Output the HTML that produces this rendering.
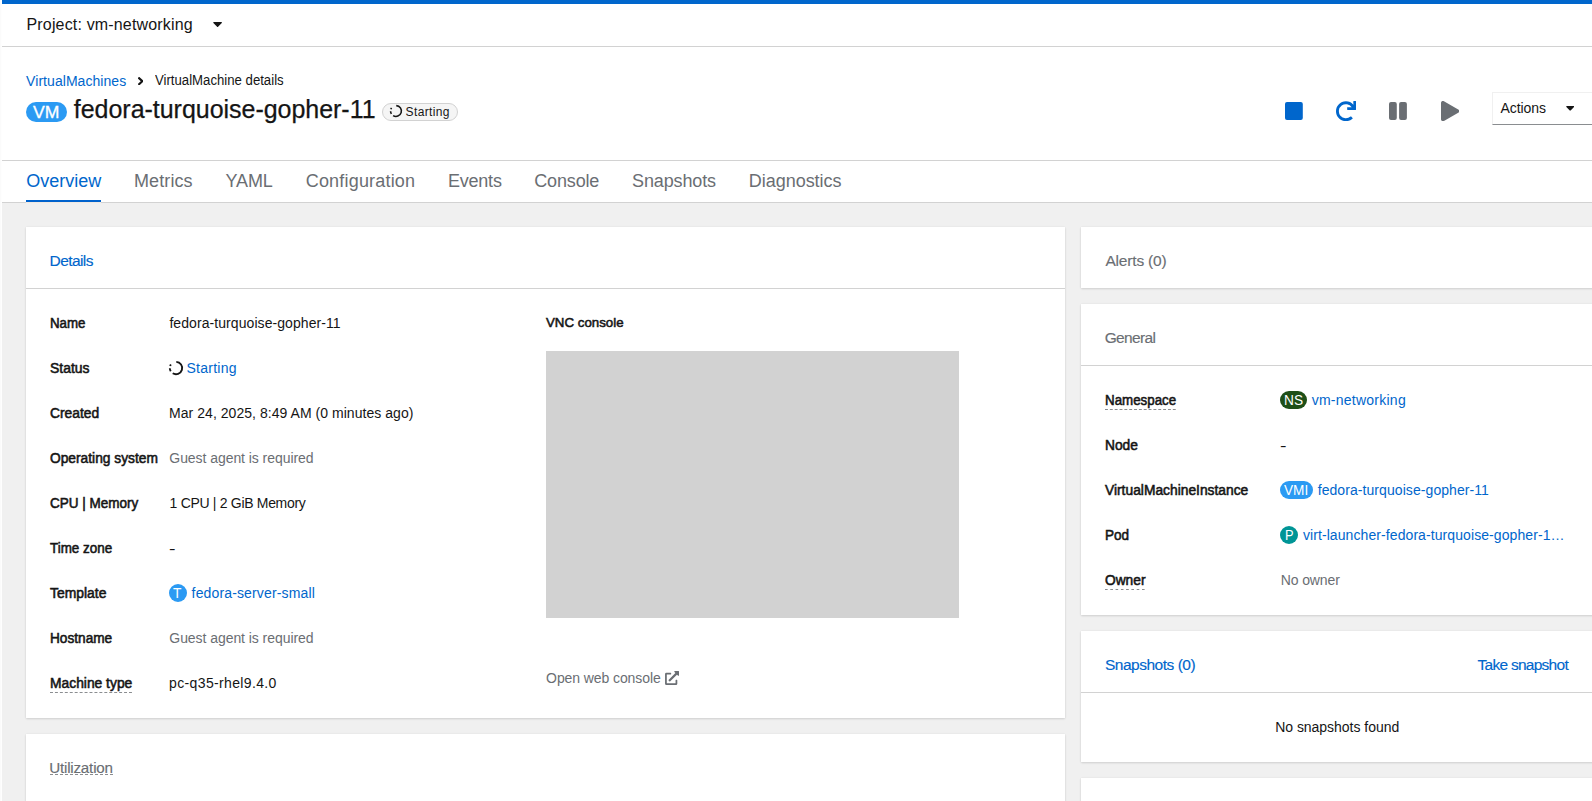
<!DOCTYPE html>
<html lang="en">
<head>
<meta charset="utf-8">
<title>fedora-turquoise-gopher-11 · VirtualMachine details</title>
<style>
html,body{margin:0;padding:0}
body{width:1592px;height:801px;overflow:hidden;position:relative;background:#f0f0f0;font-family:"Liberation Sans",Arial,sans-serif;color:#151515}
.abs,.t,.card,.hr,.badge,.dash,svg{position:absolute}
.t{white-space:nowrap;margin:0;padding:0;font-weight:400;line-height:normal;text-decoration:none;display:block}
h1.t{font-weight:400}
.edge{left:0;top:0;width:2px;height:801px;background:linear-gradient(90deg,#fbfbfb 0,#fbfbfb 50%,#fefefe 50%,#fefefe 100%)}
.topbar{left:2px;top:0;width:1590px;height:4px;background:#0066cc}
.head{left:2px;top:4px;width:1590px;height:199px;background:#fff}
.hr{height:1px;background:#d2d2d2}
.card{background:#fff;box-shadow:0 1px 2px 0 rgba(3,3,3,.12),0 0 2px 0 rgba(3,3,3,.06)}
.badge{border-radius:20px}
.dash{height:1px;background-image:linear-gradient(90deg,#8a8d90 3px,transparent 3px);background-repeat:repeat-x}
</style>
</head>
<body>
<div class="abs edge"></div>
<div class="abs topbar"></div>
<div class="abs head"></div>
<div class="hr" style="left:2px;top:46px;width:1590px"></div>
<div class="hr" style="left:2px;top:160px;width:1590px"></div>
<div class="hr" style="left:2px;top:202px;width:1590px"></div>
<div class="abs" style="left:26px;top:200px;width:75px;height:2px;background:#0062cc"></div>
<div class="abs" style="left:26px;top:202px;width:75px;height:1px;background:#f0e9e2"></div>

<!-- cards -->
<div class="card" style="left:26px;top:227px;width:1039px;height:491px"></div>
<div class="hr" style="left:26px;top:288px;width:1039px"></div>
<div class="card" style="left:26px;top:734px;width:1039px;height:100px"></div>
<div class="card" style="left:1081px;top:227px;width:520px;height:61px"></div>
<div class="card" style="left:1081px;top:304px;width:520px;height:311px"></div>
<div class="hr" style="left:1081px;top:365px;width:520px"></div>
<div class="card" style="left:1081px;top:631px;width:520px;height:131px"></div>
<div class="hr" style="left:1081px;top:692px;width:520px"></div>
<div class="card" style="left:1081px;top:778px;width:520px;height:60px"></div>

<!-- VNC placeholder -->
<div class="abs" style="left:546px;top:351px;width:413px;height:267px;background:#d2d2d2"></div>

<!-- badges -->
<div class="badge" style="left:26px;top:102px;width:41px;height:20px;background:#2b9af3"></div>
<div class="badge" style="left:382px;top:103px;width:74px;height:16px;background:#f5f5f5;border:1px solid #d2d2d2"></div>
<div class="badge" style="left:169px;top:584.2px;width:18px;height:18px;background:#2b9af3"></div>
<div class="badge" style="left:1279.9px;top:391px;width:27.4px;height:17.8px;background:#1e4f18"></div>
<div class="badge" style="left:1279.8px;top:480.9px;width:33.3px;height:17.8px;background:#2b9af3"></div>
<div class="badge" style="left:1279.8px;top:526.1px;width:18.1px;height:17.8px;background:#009596"></div>

<!-- dashed underlines -->
<div class="dash" style="left:50px;top:692px;width:82px;background-size:4.938px 1px"></div>
<div class="dash" style="left:50px;top:774px;width:63px;background-size:5.000px 1px"></div>
<div class="dash" style="left:1105px;top:409px;width:71px;background-size:4.857px 1px"></div>
<div class="dash" style="left:1105px;top:589px;width:40px;background-size:5.286px 1px"></div>

<!-- Actions dropdown box -->
<div class="abs" style="left:1492px;top:92.4px;width:110px;height:30.6px;background:#fff;border:1px solid #f0f0f0;border-bottom-color:#8a8d90"></div>

<!-- icons -->
<svg style="left:212.5px;top:22.1px" width="9.2" height="5" viewBox="0 0 9.2 5"><path d="M.9 0h7.4c.6 0 .9.7.5 1.1L5.1 4.8c-.3.3-.7.3-1 0L.4 1.1C0 .7.3 0 .9 0z" fill="#151515"/></svg>
<svg style="left:1565.7px;top:106.2px" width="8.4" height="4.6" viewBox="0 0 9.2 5"><path d="M.9 0h7.4c.6 0 .9.7.5 1.1L5.1 4.8c-.3.3-.7.3-1 0L.4 1.1C0 .7.3 0 .9 0z" fill="#151515"/></svg>
<svg style="left:137.6px;top:76.5px" width="5.7" height="8.3" viewBox="30 96 200 320" preserveAspectRatio="none"><path d="M224.3 273l-136 136c-9.4 9.4-24.6 9.4-33.9 0l-22.6-22.6c-9.4-9.4-9.4-24.6 0-33.9l96.4-96.4-96.4-96.4c-9.4-9.4-9.4-24.6 0-33.9L54.3 103c9.4-9.4 24.6-9.4 33.9 0l136 136c9.5 9.400 9.5 24.600.1 34z" fill="#151515"/></svg>
<!-- stop -->
<svg style="left:1285.1px;top:102px" width="17.8" height="17.9" viewBox="0 0 17.8 17.9"><rect width="17.8" height="17.9" rx="2" fill="#0066cc"/></svg>
<!-- restart -->
<svg style="left:1336.3px;top:100.8px" width="20.1" height="20.2" viewBox="8 0 504 504" preserveAspectRatio="none"><path d="M500.330 0h-47.410a12 12 0 0 0-12 12.570l4 82.760A247.420 247.420 0 0 0 256 8C119.340 8 7.900 119.530 8 256.190 8.100 393.070 119.100 504 256 504a247.100 247.100 0 0 0 166.180-63.910 12 12 0 0 0 .480-17.430l-34-34a12 12 0 0 0-16.380-.550A176 176 0 1 1 402.100 157.800l-101.530-4.870a12 12 0 0 0-12.570 12v47.410a12 12 0 0 0 12 12h200.330a12 12 0 0 0 12-12V12a12 12 0 0 0-12-12z" fill="#0066cc"/></svg>
<!-- pause -->
<svg style="left:1389px;top:102.1px" width="17.9" height="17.9" viewBox="0 0 17.9 17.9"><rect width="7.8" height="17.9" rx="2" fill="#6a6e73"/><rect x="10.1" width="7.8" height="17.9" rx="2" fill="#6a6e73"/></svg>
<!-- play -->
<svg style="left:1440.9px;top:100.8px" width="18.2" height="20.2" viewBox="0 0 448 512" preserveAspectRatio="none"><path d="M424.400 214.700L72.400 6.600C43.800-10.300 0 6.100 0 47.900V464c0 37.500 40.700 60.100 72.400 41.300l352-208c31.400-18.500 31.500-64.100 0-82.600z" fill="#6a6e73"/></svg>
<!-- spinner in title label -->
<svg style="left:388.9px;top:103.9px" width="14" height="14" viewBox="-8 -8 16 16"><g fill="none" stroke="#151515" stroke-width="1.85"><path d="M0.300 -6.200A6.200 6.200 0 1 1 -3.300 5.250"/><path d="M-5.250 3.300A6.200 6.200 0 0 1 -6.200 0.200"/><path d="M-5.850 -2.050A6.200 6.200 0 0 1 -5.100 -3.550"/></g></svg>
<!-- spinner in status row -->
<svg style="left:167.900px;top:359.800px" width="16" height="16" viewBox="-8 -8 16 16"><g fill="none" stroke="#151515" stroke-width="1.85"><path d="M0.300 -6.200A6.200 6.200 0 1 1 -3.300 5.250"/><path d="M-5.250 3.300A6.200 6.200 0 0 1 -6.200 0.200"/><path d="M-5.850 -2.050A6.200 6.200 0 0 1 -5.100 -3.550"/></g></svg>
<!-- external link -->
<svg style="left:665px;top:671px" width="14.1" height="14" viewBox="0 0 512 512"><path d="M432 320h-32a16 16 0 0 0-16 16v112H64V128h144a16 16 0 0 0 16-16V80a16 16 0 0 0-16-16H48a48 48 0 0 0-48 48v352a48 48 0 0 0 48 48h352a48 48 0 0 0 48-48V336a16 16 0 0 0-16-16zM488 0H360c-21.370 0-32.050 25.910-17 41l35.730 35.730L135 320.370a24 24 0 0 0 0 34L157.670 377a24 24 0 0 0 34 0l243.610-243.680L471 169c15 15 41 4.500 41-17V24a24 24 0 0 0-24-24z" fill="#6a6e73"/></svg>

<header>
<span class="t" style="left:26.5px;top:16.00px;font-size:16px;letter-spacing:0.161px;">Project: vm-networking</span>
<a class="t" style="left:26.1px;top:73.00px;font-size:14px;color:#0066cc;letter-spacing:0.053px;">VirtualMachines</a>
<span class="t" style="left:154.6px;top:72.00px;font-size:14px;transform:scaleX(0.941);transform-origin:0 0;">VirtualMachine details</span>
<span class="t" style="left:33.0px;top:103.00px;font-size:16.8px;color:#fff;transform:scaleX(1.049);transform-origin:0 0;-webkit-text-stroke:0.3px #fff;">VM</span>
<h1 class="t" style="left:73.8px;top:95.00px;font-size:25px;letter-spacing:-0.029px;-webkit-text-stroke:0.25px #151515;">fedora-turquoise-gopher-11</h1>
<span class="t" style="left:405.6px;top:105.00px;font-size:12px;letter-spacing:0.363px;">Starting</span>
<span class="t" style="left:1500.4px;top:100.00px;font-size:14px;letter-spacing:-0.037px;">Actions</span>
</header>
<nav aria-label="VirtualMachine tabs">
<a class="t" style="left:26.3px;top:171.00px;font-size:18px;color:#0066cc;letter-spacing:-0.017px;">Overview</a>
<a class="t" style="left:134.0px;top:171.00px;font-size:18px;color:#6a6e73;letter-spacing:0.100px;">Metrics</a>
<a class="t" style="left:225.5px;top:171.00px;font-size:18px;color:#6a6e73;letter-spacing:-0.129px;">YAML</a>
<a class="t" style="left:305.7px;top:171.00px;font-size:18px;color:#6a6e73;letter-spacing:0.193px;">Configuration</a>
<a class="t" style="left:448.0px;top:171.00px;font-size:18px;color:#6a6e73;letter-spacing:-0.226px;">Events</a>
<a class="t" style="left:534.2px;top:171.00px;font-size:18px;color:#6a6e73;letter-spacing:-0.141px;">Console</a>
<a class="t" style="left:632.0px;top:171.00px;font-size:18px;color:#6a6e73;letter-spacing:-0.120px;">Snapshots</a>
<a class="t" style="left:748.7px;top:171.00px;font-size:18px;color:#6a6e73;letter-spacing:-0.015px;">Diagnostics</a>
</nav>
<section aria-label="Details">
<a class="t" style="left:49.5px;top:252.00px;font-size:15.5px;color:#0066cc;letter-spacing:-0.565px;-webkit-text-stroke:0.15px;">Details</a>
<dt class="t" style="left:49.9px;top:315.00px;font-size:14px;transform:scaleX(0.950);transform-origin:0 0;-webkit-text-stroke:0.55px #151515;">Name</dt>
<dt class="t" style="left:49.9px;top:360.00px;font-size:14px;transform:scaleX(0.995);transform-origin:0 0;-webkit-text-stroke:0.55px #151515;">Status</dt>
<dt class="t" style="left:49.9px;top:405.00px;font-size:14px;transform:scaleX(0.986);transform-origin:0 0;-webkit-text-stroke:0.55px #151515;">Created</dt>
<dt class="t" style="left:49.9px;top:450.00px;font-size:14px;transform:scaleX(0.983);transform-origin:0 0;-webkit-text-stroke:0.55px #151515;">Operating system</dt>
<dt class="t" style="left:49.9px;top:495.00px;font-size:14px;transform:scaleX(0.965);transform-origin:0 0;-webkit-text-stroke:0.55px #151515;">CPU | Memory</dt>
<dt class="t" style="left:49.9px;top:540.00px;font-size:14px;transform:scaleX(0.959);transform-origin:0 0;-webkit-text-stroke:0.55px #151515;">Time zone</dt>
<dt class="t" style="left:49.9px;top:585.00px;font-size:14px;transform:scaleX(0.994);transform-origin:0 0;-webkit-text-stroke:0.55px #151515;">Template</dt>
<dt class="t" style="left:49.9px;top:630.00px;font-size:14px;transform:scaleX(0.975);transform-origin:0 0;-webkit-text-stroke:0.55px #151515;">Hostname</dt>
<dt class="t" style="left:49.9px;top:675.00px;font-size:14px;transform:scaleX(0.988);transform-origin:0 0;-webkit-text-stroke:0.55px #151515;">Machine type</dt>
<dd class="t" style="left:169.4px;top:315.00px;font-size:14px;letter-spacing:0.072px;">fedora-turquoise-gopher-11</dd>
<a class="t" style="left:186.5px;top:360.00px;font-size:14px;color:#0066cc;letter-spacing:0.250px;">Starting</a>
<dd class="t" style="left:169.1px;top:405.00px;font-size:14px;letter-spacing:0.041px;">Mar 24, 2025, 8:49 AM (0 minutes ago)</dd>
<dd class="t" style="left:169.3px;top:450.00px;font-size:14px;color:#6a6e73;letter-spacing:-0.056px;">Guest agent is required</dd>
<dd class="t" style="left:169.6px;top:495.00px;font-size:14px;letter-spacing:-0.312px;">1 CPU | 2 GiB Memory</dd>
<dd class="t" style="left:168.8px;top:541.00px;font-size:14px;transform:scaleX(1.391);transform-origin:0 0;">-</dd>
<span class="t" style="left:173.3px;top:585.00px;font-size:14px;color:#fff;transform:scaleX(0.981);transform-origin:0 0;">T</span>
<a class="t" style="left:191.6px;top:585.00px;font-size:14px;color:#0066cc;letter-spacing:0.145px;">fedora-server-small</a>
<dd class="t" style="left:169.3px;top:630.00px;font-size:14px;color:#6a6e73;letter-spacing:-0.056px;">Guest agent is required</dd>
<dd class="t" style="left:169.1px;top:675.00px;font-size:14px;letter-spacing:0.356px;">pc-q35-rhel9.4.0</dd>
<span class="t" style="left:545.8px;top:315.00px;font-size:13.6px;transform:scaleX(0.978);transform-origin:0 0;-webkit-text-stroke:0.55px #151515;">VNC console</span>
<a class="t" style="left:546.1px;top:670.00px;font-size:14px;color:#6a6e73;letter-spacing:-0.091px;">Open web console</a>
</section>
<section aria-label="Utilization">
<span class="t" style="left:49.2px;top:759.00px;font-size:15.2px;color:#6a6e73;letter-spacing:-0.204px;-webkit-text-stroke:0.15px;">Utilization</span>
</section>
<section aria-label="Alerts">
<span class="t" style="left:1105.4px;top:252.00px;font-size:15.5px;color:#6a6e73;letter-spacing:-0.175px;-webkit-text-stroke:0.15px;">Alerts (0)</span>
</section>
<section aria-label="General">
<span class="t" style="left:1104.7px;top:329.00px;font-size:15.5px;color:#6a6e73;letter-spacing:-0.659px;-webkit-text-stroke:0.15px;">General</span>
<dt class="t" style="left:1105.2px;top:392.00px;font-size:14px;transform:scaleX(0.952);transform-origin:0 0;-webkit-text-stroke:0.55px #151515;">Namespace</dt>
<dt class="t" style="left:1105.2px;top:437.00px;font-size:14px;transform:scaleX(0.983);transform-origin:0 0;-webkit-text-stroke:0.55px #151515;">Node</dt>
<dt class="t" style="left:1105.2px;top:482.00px;font-size:14px;transform:scaleX(0.986);transform-origin:0 0;-webkit-text-stroke:0.55px #151515;">VirtualMachineInstance</dt>
<dt class="t" style="left:1105.2px;top:527.00px;font-size:14px;transform:scaleX(0.967);transform-origin:0 0;-webkit-text-stroke:0.55px #151515;">Pod</dt>
<dt class="t" style="left:1105.2px;top:572.00px;font-size:14px;transform:scaleX(0.982);transform-origin:0 0;-webkit-text-stroke:0.55px #151515;">Owner</dt>
<span class="t" style="left:1284.3px;top:392.00px;font-size:14px;color:#fff;transform:scaleX(0.977);transform-origin:0 0;">NS</span>
<a class="t" style="left:1311.7px;top:392.00px;font-size:14px;color:#0066cc;letter-spacing:0.247px;">vm-networking</a>
<dd class="t" style="left:1280.2px;top:438.00px;font-size:14px;transform:scaleX(1.391);transform-origin:0 0;">-</dd>
<span class="t" style="left:1284.3px;top:482.00px;font-size:14px;color:#fff;transform:scaleX(0.972);transform-origin:0 0;">VMI</span>
<a class="t" style="left:1317.7px;top:482.00px;font-size:14px;color:#0066cc;letter-spacing:0.072px;">fedora-turquoise-gopher-11</a>
<span class="t" style="left:1284.6px;top:527.00px;font-size:14px;color:#fff;transform:scaleX(0.920);transform-origin:0 0;">P</span>
<a class="t" style="left:1302.9px;top:527.00px;font-size:14px;color:#0066cc;letter-spacing:0.086px;">virt-launcher-fedora-turquoise-gopher-1…</a>
<dd class="t" style="left:1280.8px;top:572.00px;font-size:14px;color:#6a6e73;letter-spacing:-0.132px;">No owner</dd>
</section>
<section aria-label="Snapshots">
<a class="t" style="left:1105.0px;top:656.00px;font-size:15.5px;color:#0066cc;letter-spacing:-0.492px;-webkit-text-stroke:0.15px;">Snapshots (0)</a>
<a class="t" style="left:1477.5px;top:656.00px;font-size:15.5px;color:#0066cc;letter-spacing:-0.731px;-webkit-text-stroke:0.15px;">Take snapshot</a>
<span class="t" style="left:1275.2px;top:719.00px;font-size:14px;letter-spacing:-0.031px;">No snapshots found</span>
</section>
</body>
</html>
